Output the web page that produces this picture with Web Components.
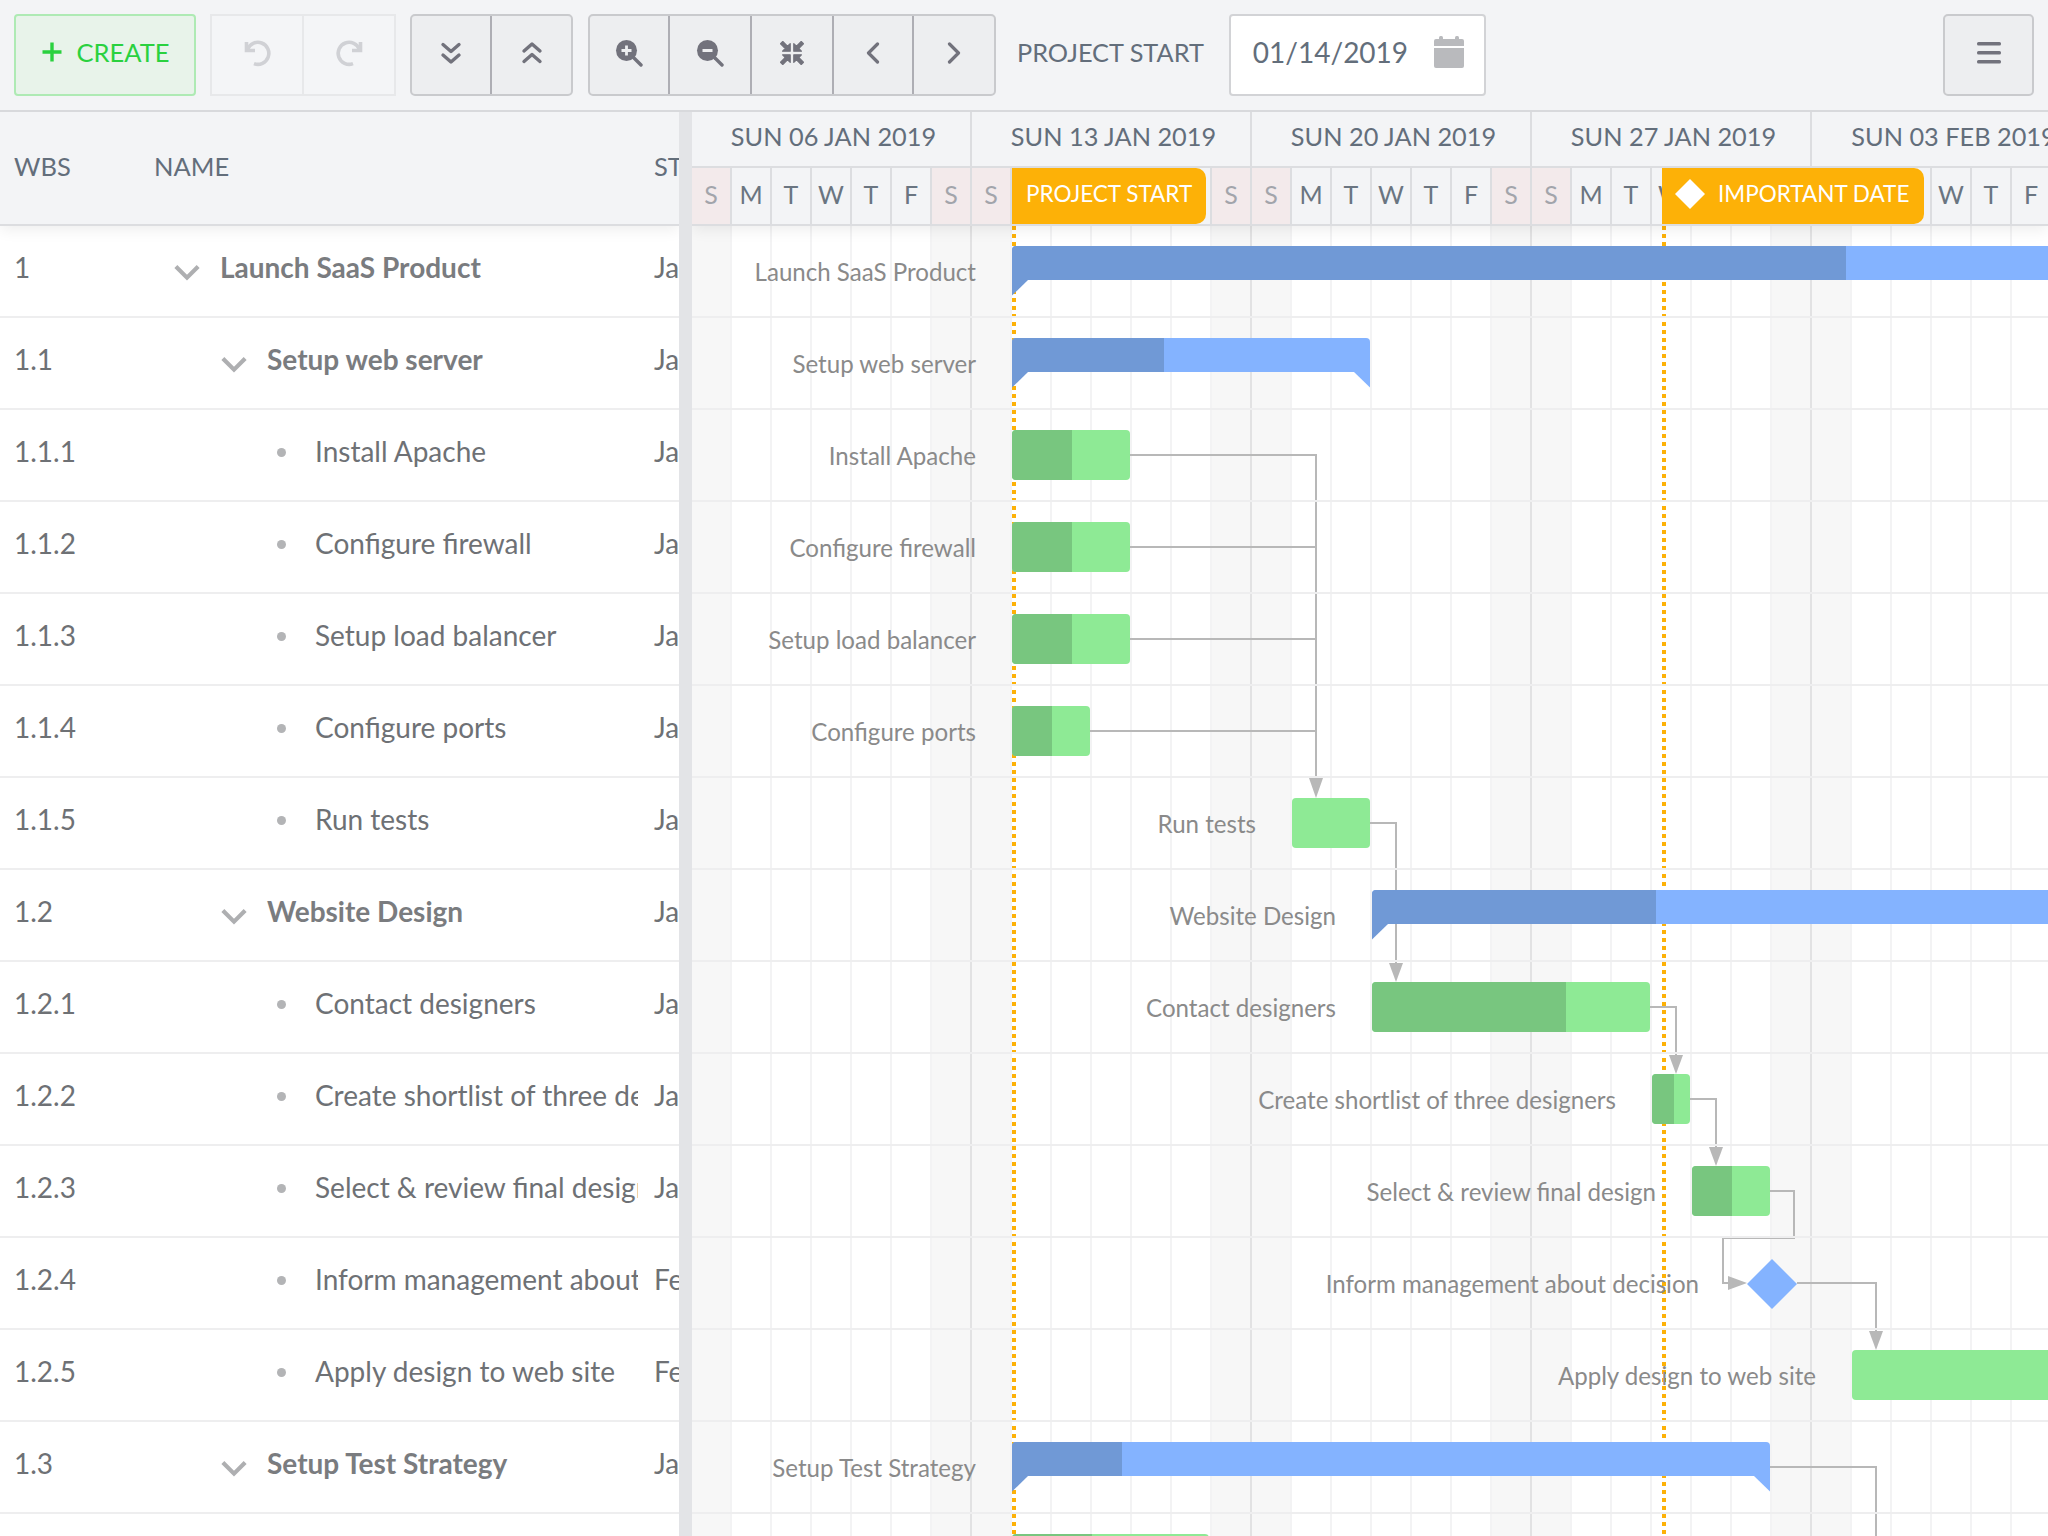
<!DOCTYPE html>
<html><head><meta charset="utf-8"><title>Gantt</title>
<style>
html,body{margin:0;padding:0;width:2048px;height:1536px;overflow:hidden;background:#fff;font-family:Lato,"Open Sans",sans-serif}
</style></head><body>
<gantt-app></gantt-app>
<script>
const ICONS={
plus:'<svg width="22" height="22" viewBox="0 0 22 22"><path d="M11 1.5v19M1.5 11h19" stroke="#2ad13f" stroke-width="3.4" fill="none"/></svg>',
undo:'<svg width="30" height="30" viewBox="1 0 30 30" fill="none" stroke="#d0d1d5" stroke-width="3.6"><path d="M5.5 4v8.5H14"/><path d="M6.5 11.5A11 11 0 1 1 13 25.6"/></svg>',
redo:'<svg width="30" height="30" viewBox="-2 0 30 30" fill="none" stroke="#d0d1d5" stroke-width="3.6"><path d="M24.5 4v8.5H16"/><path d="M23.5 11.5A11 11 0 1 0 17 25.6"/></svg>',
ddown:'<svg width="24" height="24" viewBox="0 0 24 24" fill="none" stroke="#72727c" stroke-width="3.4" stroke-linecap="round" stroke-linejoin="round"><path d="M4 3.5l8 7 8-7M4 14l8 7 8-7"/></svg>',
dup:'<svg width="24" height="24" viewBox="0 0 24 24" fill="none" stroke="#72727c" stroke-width="3.4" stroke-linecap="round" stroke-linejoin="round"><path d="M4 10l8-7 8 7M4 20.5l8-7 8 7"/></svg>',
zin:'<svg width="28" height="28" viewBox="0 0 28 28"><circle cx="11.5" cy="11.5" r="10.5" fill="#72727c"/><path d="M19 19l7 7" stroke="#72727c" stroke-width="3.4" stroke-linecap="round"/><path d="M11.5 6.5v10M6.5 11.5h10" stroke="#edeef0" stroke-width="2.8"/></svg>',
zout:'<svg width="28" height="28" viewBox="0 0 28 28"><circle cx="11.5" cy="11.5" r="10.5" fill="#72727c"/><path d="M19 19l7 7" stroke="#72727c" stroke-width="3.4" stroke-linecap="round"/><path d="M6.5 11.5h10" stroke="#edeef0" stroke-width="2.8"/></svg>',
fit:'<svg width="26" height="26" viewBox="2 2 22 22" fill="#72727c" stroke="#72727c" stroke-linecap="round" stroke-linejoin="round" stroke-width="1"><path d="M11.500 11.500H5L7.300 9.200 3.300 5.200 5.200 3.300 9.200 7.300 11.500 5Z"/><path d="M14.500 11.500H21L18.700 9.200 22.700 5.200 20.800 3.300 16.800 7.300 14.500 5Z"/><path d="M11.500 14.500H5L7.300 16.800 3.300 20.800 5.200 22.700 9.200 18.700 11.500 21Z"/><path d="M14.500 14.500H21L18.700 16.800 22.700 20.800 20.800 22.700 16.800 18.700 14.500 21Z"/></svg>',
prev:'<svg width="14" height="22" viewBox="0 0 14 22" fill="none" stroke="#72727c" stroke-width="3.2" stroke-linecap="round" stroke-linejoin="round"><path d="M11.500 2L2.500 11l9 9"/></svg>',
next:'<svg width="14" height="22" viewBox="0 0 14 22" fill="none" stroke="#72727c" stroke-width="3.2" stroke-linecap="round" stroke-linejoin="round"><path d="M2.500 2l9 9-9 9"/></svg>',
menu:'<svg width="24" height="22" viewBox="0 0 24 22" fill="#72727c"><rect x="0" y="0" width="24" height="3.600" rx="1.500"/><rect x="0" y="9" width="24" height="3.600" rx="1.500"/><rect x="0" y="18" width="24" height="3.600" rx="1.500"/></svg>',
cal:'<svg width="30" height="32" viewBox="0 0 30 32" fill="#b9babd"><rect x="5" y="0" width="4" height="6" rx="1.500"/><rect x="21" y="0" width="4" height="6" rx="1.500"/><path d="M2 3h26a2 2 0 0 1 2 2v5H0V5a2 2 0 0 1 2-2z"/><path d="M0 12h30v18a2 2 0 0 1-2 2H2a2 2 0 0 1-2-2z"/></svg>'
};
function def(name,html,init){
  customElements.define(name,class extends HTMLElement{
    connectedCallback(){
      if(this.shadowRoot)return;
      const r=this.attachShadow({mode:'open'});
      r.innerHTML=typeof html==='function'?html(this):html;
      if(init)init(this,r);
    }
  });
}
def('tool-btn',h=>`<style>
:host{display:flex;align-items:center;justify-content:center;box-sizing:border-box;height:100%;padding-bottom:5px;width:${h.getAttribute('w')||80}px;border-right:2px solid var(--div,#aeaeb4)}
:host(:last-child){border-right:none}
</style>${ICONS[h.getAttribute('icon')]||''}`);
def('btn-group',`<style>
:host{display:flex;box-sizing:border-box;height:82px;background:#edeef0;border:2px solid #c9cacd;border-radius:5px;overflow:hidden}
:host([off]){background:#f4f5f7;border-radius:0;border-color:#e7e8ea;--div:#e7e8ea}
</style><slot></slot>`);
def('create-btn',`<style>
:host{display:flex;align-items:center;justify-content:center;gap:14px;box-sizing:border-box;width:182px;height:82px;padding-bottom:6px;background:#e8f3ea;border:2px solid #aeeab4;border-radius:4px;color:#2ad13f;font-size:25.500px}
</style>${ICONS.plus}<span>CREATE</span>`);
def('date-field',`<style>
:host{display:flex;align-items:center;box-sizing:border-box;width:257px;height:82px;padding:0 20px 7px 22px;background:#fff;border:2px solid #d2d3d6;border-radius:4px;color:#636e7b;font-size:28px;justify-content:space-between}
</style><span>01/14/2019</span>${ICONS.cal}`);
def('gantt-toolbar',`<style>
:host{display:flex;align-items:center;box-sizing:border-box;height:112px;padding:0 14px;background:#f3f4f6;border-bottom:2px solid #d8d9dc;color:#636e7b}
.lbl{font-size:25.300px;margin:0 25px 7px 21px;white-space:nowrap}
.sp{flex:1}
btn-group,create-btn{flex:none}
</style>
<create-btn></create-btn>
<btn-group off style="margin-left:14px"><tool-btn w="92" icon="undo"></tool-btn><tool-btn w="90" icon="redo"></tool-btn></btn-group>
<btn-group style="margin-left:14px"><tool-btn w="80" icon="ddown"></tool-btn><tool-btn w="79" icon="dup"></tool-btn></btn-group>
<btn-group style="margin-left:15px"><tool-btn w="80" icon="zin"></tool-btn><tool-btn w="82" icon="zout"></tool-btn><tool-btn w="82" icon="fit"></tool-btn><tool-btn w="80" icon="prev"></tool-btn><tool-btn w="80" icon="next"></tool-btn></btn-group>
<span class="lbl">PROJECT START</span>
<date-field></date-field>
<span class="sp"></span>
<btn-group style="width:91px"><tool-btn w="87" icon="menu"></tool-btn></btn-group>`);
def('table-row',h=>{
  const lv=+h.getAttribute('level'),sum=h.hasAttribute('summary');
  return `<style>
:host{display:grid;grid-template-columns:140px 498px 41px;box-sizing:border-box;height:92px;border-bottom:2px solid #eeeeef;line-height:83px;font-size:28px;color:#6e7175;overflow:hidden;white-space:nowrap}
.w{padding-left:14px}
.n{display:flex;overflow:hidden;padding-left:${34+47*lv}px}
.i{flex:none;width:26px;margin-right:${lv==2?21:20}px;display:flex;align-items:center;justify-content:center;height:85px}
.t{font-weight:${sum?700:400};${sum?'color:#7a7c7f;':''}}
.s{padding-left:16px}
.dot{width:9px;height:9px;border-radius:50%;background:#b3b4b6}
</style><div class="w">${h.getAttribute('wbs')}</div><div class="n"><span class="i">${sum?'<svg width="28" height="17" viewBox="0 0 28 17" style="margin-top:8px"><path d="M2 2l12 12L26 2" fill="none" stroke="#aeafb1" stroke-width="4.500"/></svg>':'<span class="dot"></span>'}</span><span class="t">${h.getAttribute('name')}</span></div><div class="s">${h.getAttribute('start')}</div>`;
});
def('gantt-table',`<style>
:host{display:block;width:679px;flex:none;position:relative;overflow:hidden}
.h{display:grid;grid-template-columns:140px 500px 39px;box-sizing:border-box;height:114px;background:#f3f4f6;border-bottom:2px solid #dcdde0;align-items:center;color:#636e7b;font-size:25.500px;white-space:nowrap;overflow:hidden;box-shadow:0 4px 14px rgba(0,0,0,.07);position:relative;padding-bottom:4px}
.h span:nth-child(1){padding-left:14px}.h span:nth-child(2){padding-left:14px}.h span:nth-child(3){padding-left:14px}
</style><div class="h"><span>WBS</span><span>NAME</span><span>START</span></div><slot></slot>`);
def('day-cell',h=>`<style>
:host{flex:none;width:40px;box-sizing:border-box;height:100%;border-right:2px solid #dcdde0;display:flex;align-items:center;justify-content:center;padding-bottom:4px;color:#6a7581;font-size:25px;background:#f3f4f6}
:host([we]){background:#f3eaeb;color:#a2a5ab}
</style><slot></slot>`);
def('week-cell',`<style>
:host{flex:none;width:280px;box-sizing:border-box;border-right:2px solid #dcdde0;display:flex;align-items:center;justify-content:center;padding-bottom:6px;padding-left:5px;color:#636e7b;font-size:25.300px;white-space:nowrap;overflow:hidden}
</style><slot></slot>`);
def('axis-marker',`<style>
:host{position:absolute;top:0;bottom:0;display:flex;align-items:center;box-sizing:border-box;background:#fdb107;color:#fff;font-size:22.500px;border-radius:0 10px 10px 0;white-space:nowrap;padding-bottom:5px}
</style><slot></slot>`);
def('time-axis',`<style>
:host{display:block;height:114px;background:#f3f4f6;border-bottom:2px solid #dcdde0;box-sizing:border-box;position:relative;z-index:3;box-shadow:0 4px 14px rgba(0,0,0,.07)}
.w{display:flex;height:54px;border-bottom:2px solid #dcdde0;overflow:hidden}
.dwrap{position:relative;height:56px;overflow:hidden}
.d{display:flex;height:56px;width:1400px}
</style><div class="w" id="w"></div><div class="dwrap"><div class="d" id="d"></div>
<axis-marker style="left:320px;width:194px;padding-left:14px">PROJECT START</axis-marker>
<axis-marker style="left:970px;width:262px;padding-left:13px"><svg width="30" height="30" viewBox="0 0 30 30" style="margin-right:13px;flex:none"><path d="M15 0l15 15-15 15L0 15z" fill="#fff"/></svg>IMPORTANT DATE</axis-marker></div>`,
(h,r)=>{
  ['SUN 06 JAN 2019','SUN 13 JAN 2019','SUN 20 JAN 2019','SUN 27 JAN 2019','SUN 03 FEB 2019'].forEach(t=>{const c=document.createElement('week-cell');c.textContent=t;r.getElementById('w').append(c)});
  const L='SMTWTFS';
  for(let i=0;i<35;i++){const c=document.createElement('day-cell');c.textContent=L[i%7];if(i%7==0||i%7==6)c.setAttribute('we','');r.getElementById('d').append(c)}
});
def('grid-day',`<style>:host{flex:none;width:40px;box-sizing:border-box;height:100%;border-right:2px solid #f3f3f4}
:host([we]){background:#f7f7f7}:host([end]){border-right-color:#e2e2e3}</style>`);
def('gantt-grid',`<style>:host{position:absolute;left:0;top:0;bottom:0;display:flex;width:1400px}</style>`,(h,r)=>{
  for(let i=0;i<35;i++){const c=document.createElement('grid-day');if(i%7==0||i%7==6)c.setAttribute('we','');if(i%7==6)c.setAttribute('end','');r.append(c)}
});
def('gantt-row',h=>{
  const a=h.getAttribute.bind(h),s=+a('from'),e=+a('to'),p=+a('prog')||s,t=a('type');
  const dark=t=='task'?'#78c67f':'#7099d6',light=t=='task'?'#8eea95':'#84b3ff';
  const lblR=2048-692-(s-692)+(+a('lgap')||36);
  let shape='';
  if(t=='ms'){shape=`<svg style="position:absolute;left:${s-692}px;top:21px" width="50" height="50" viewBox="0 0 50 50"><path d="M25 0L50 25 25 50 0 25z" fill="${light}"/></svg>`;}
  else{
    const H=t=='sum'?34:50;
    const pw=p-s,w=e-s;
    shape=`<div style="position:absolute;left:${s-692}px;top:20px;width:${w}px;height:${H}px;border-radius:${t=='sum'?'4px 4px 0 0':'4px'};overflow:hidden;background:${light}"><div style="width:${pw}px;height:100%;background:${dark}"></div></div>`;
    if(t=='sum'){
      shape+=`<svg style="position:absolute;left:${s-692}px;top:54px" width="16" height="16"><path d="M0 0H16L0 15.500z" fill="${pw>0?dark:light}"/></svg>`;
      shape+=`<svg style="position:absolute;left:${e-692-16}px;top:54px" width="16" height="16"><path d="M16 0H0L16 15.500z" fill="${light}"/></svg>`;
    }
  }
  return `<style>
:host{display:block;position:relative;box-sizing:border-box;height:92px;border-bottom:2px solid #eeeeef}
.l{position:absolute;right:${lblR}px;top:0;line-height:91px;font-size:24.100px;color:#8a8a8a;white-space:nowrap}
</style><span class="l">${a('label')}</span>${shape}`;
});
def('gantt-chart',`<style>
:host{display:block;position:relative;flex:1;overflow:hidden;min-width:0}
.b{position:relative;height:1310px}
.over{position:absolute;left:0;top:0;pointer-events:none}
</style><time-axis></time-axis>
<div class="b"><gantt-grid></gantt-grid>
<svg class="over" width="1356" height="1310" viewBox="692 226 1356 1310">
<path d="M1014 226V1536M1664 226V1536" stroke="#fdb107" stroke-width="4" stroke-dasharray="4 4" fill="none"/>
<g fill="none" stroke="#b8b8b8" stroke-width="2">
<path d="M1130 455H1316V780M1130 547H1316M1130 639H1316M1090 731H1316"/>
<path d="M1370 823H1396V964"/>
<path d="M1650 1007H1676V1056"/>
<path d="M1690 1099H1716V1148"/>
<path d="M1770 1191H1794V1238H1723V1283H1730"/>
<path d="M1797 1283H1876V1332"/>
<path d="M1770 1467H1876V1536"/>
</g>
<g fill="#b8b8b8">
<path d="M1309 778h14l-7 20z"/><path d="M1389 963h14l-7 19z"/><path d="M1669 1055h14l-7 19z"/><path d="M1709 1147h14l-7 19z"/><path d="M1869 1331h14l-7 19z"/><path d="M1728 1276v14l19-7z"/>
</g></svg>
<div style="position:relative"><slot></slot></div></div>`);
def('gantt-app',`<style>
:host{display:block;width:2048px;height:1536px;overflow:hidden;font-family:Lato,"Open Sans",sans-serif}
.m{display:flex;height:1424px}
.s{flex:none;width:13px;background:#e3e4e7;position:relative;z-index:4}
</style><gantt-toolbar></gantt-toolbar><div class="m"><gantt-table id="t"></gantt-table><div class="s"></div><gantt-chart id="c"></gantt-chart></div>`,(h,r)=>{
  const rows=[
  ['1',0,1,'Launch SaaS Product','January 13','sum',1012,2300,1846],
  ['1.1',1,1,'Setup web server','January 13','sum',1012,1370,1164],
  ['1.1.1',2,0,'Install Apache','January 13','task',1012,1130,1072],
  ['1.1.2',2,0,'Configure firewall','January 13','task',1012,1130,1072],
  ['1.1.3',2,0,'Setup load balancer','January 13','task',1012,1130,1072],
  ['1.1.4',2,0,'Configure ports','January 13','task',1012,1090,1052],
  ['1.1.5',2,0,'Run tests','January 20','task',1292,1370,1292],
  ['1.2',1,1,'Website Design','January 22','sum',1372,2400,1656],
  ['1.2.1',2,0,'Contact designers','January 22','task',1372,1650,1566],
  ['1.2.2',2,0,'Create shortlist of three designers','January 29','task',1652,1690,1674],
  ['1.2.3',2,0,'Select &amp; review final design','January 30','task',1692,1770,1732],
  ['1.2.4',2,0,'Inform management about decision','February 2','ms',1747,1797,0],
  ['1.2.5',2,0,'Apply design to web site','February 4','task',1852,2400,1852],
  ['1.3',1,1,'Setup Test Strategy','January 13','sum',1012,1770,1122],
  ['1.3.1',2,0,'Hire QA staff','January 13','task',1012,1209,1092]];
  const t=r.getElementById('t'),c=r.getElementById('c');
  rows.forEach((o,i)=>{
    const a=document.createElement('table-row');
    a.setAttribute('wbs',o[0]);a.setAttribute('level',o[1]); if(o[2])a.setAttribute('summary','');
    a.setAttribute('name',o[3]);a.setAttribute('start',o[4].slice(0,3));t.append(a);
    const g=document.createElement('gantt-row');
    g.setAttribute('type',o[5]);g.setAttribute('from',o[6]);g.setAttribute('to',o[7]);g.setAttribute('prog',o[8]);g.setAttribute('label',o[3]);
    if(o[5]=='ms')g.setAttribute('lgap',48);
    c.append(g);
  });
});
</script></body></html>
